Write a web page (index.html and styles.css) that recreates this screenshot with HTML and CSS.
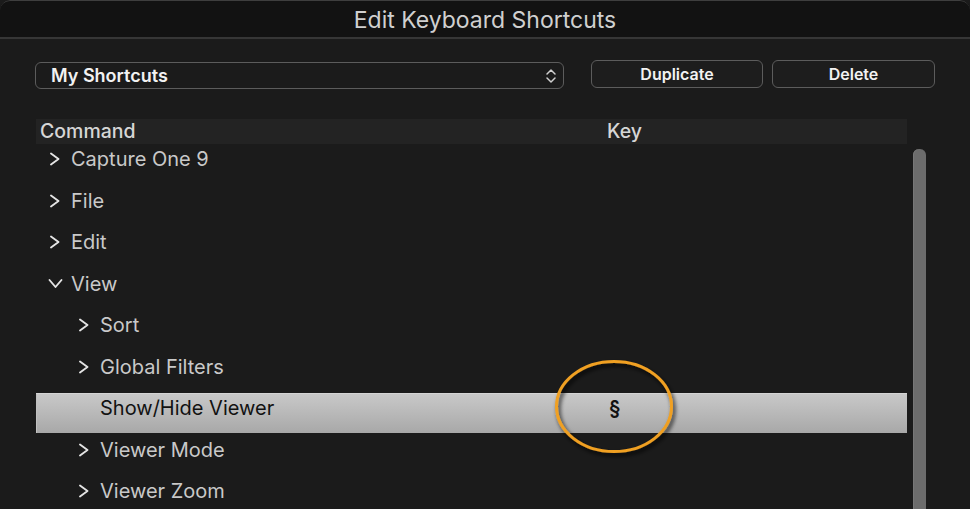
FILE: index.html
```html
<!DOCTYPE html>
<html>
<head>
<meta charset="utf-8">
<link rel="stylesheet" href="styles.css">
</head>
<body>
<div class="window">
  <div class="titlebar">Edit Keyboard Shortcuts</div>
  <div class="toolbar">
    <div class="popup">
      <span>My Shortcuts</span>
      <svg class="updown" width="12" height="18" viewBox="0 0 12 18"><path d="M2 7 L6 3 L10 7 M2 11 L6 15 L10 11" fill="none" stroke="#cfcfcf" stroke-width="1.5" stroke-linecap="round" stroke-linejoin="round"/></svg>
    </div>
    <div class="btn dup">Duplicate</div>
    <div class="btn del">Delete</div>
  </div>
  <div class="table">
    <div class="list">
      <div class="header"><span class="cmd">Command</span><span class="key">Key</span></div>
      <div class="row l1"><div class="cmd"><span class="chev"><svg width="12" height="14" viewBox="0 0 12 14"><path d="M2 1.5 L9.5 7 L2 12.5" fill="none" stroke="#e4e4e4" stroke-width="1.9" stroke-linecap="round" stroke-linejoin="round"/></svg></span><span>Capture One 9</span></div></div>
      <div class="row l1"><div class="cmd"><span class="chev"><svg width="12" height="14" viewBox="0 0 12 14"><path d="M2 1.5 L9.5 7 L2 12.5" fill="none" stroke="#e4e4e4" stroke-width="1.9" stroke-linecap="round" stroke-linejoin="round"/></svg></span><span>File</span></div></div>
      <div class="row l1"><div class="cmd"><span class="chev"><svg width="12" height="14" viewBox="0 0 12 14"><path d="M2 1.5 L9.5 7 L2 12.5" fill="none" stroke="#e4e4e4" stroke-width="1.9" stroke-linecap="round" stroke-linejoin="round"/></svg></span><span>Edit</span></div></div>
      <div class="row l1"><div class="cmd"><span class="chev down"><svg width="15" height="11" viewBox="0 0 15 11"><path d="M1.5 2 L7.5 9 L13.5 2" fill="none" stroke="#e4e4e4" stroke-width="1.9" stroke-linecap="round" stroke-linejoin="round"/></svg></span><span>View</span></div></div>
      <div class="row l2"><div class="cmd"><span class="chev"><svg width="12" height="14" viewBox="0 0 12 14"><path d="M2 1.5 L9.5 7 L2 12.5" fill="none" stroke="#e4e4e4" stroke-width="1.9" stroke-linecap="round" stroke-linejoin="round"/></svg></span><span>Sort</span></div></div>
      <div class="row l2"><div class="cmd"><span class="chev"><svg width="12" height="14" viewBox="0 0 12 14"><path d="M2 1.5 L9.5 7 L2 12.5" fill="none" stroke="#e4e4e4" stroke-width="1.9" stroke-linecap="round" stroke-linejoin="round"/></svg></span><span>Global Filters</span></div></div>
      <div class="row l2 selected"><div class="cmd"><span class="chev"></span><span>Show/Hide Viewer</span></div><div class="key">§</div></div>
      <div class="row l2"><div class="cmd"><span class="chev"><svg width="12" height="14" viewBox="0 0 12 14"><path d="M2 1.5 L9.5 7 L2 12.5" fill="none" stroke="#e4e4e4" stroke-width="1.9" stroke-linecap="round" stroke-linejoin="round"/></svg></span><span>Viewer Mode</span></div></div>
      <div class="row l2"><div class="cmd"><span class="chev"><svg width="12" height="14" viewBox="0 0 12 14"><path d="M2 1.5 L9.5 7 L2 12.5" fill="none" stroke="#e4e4e4" stroke-width="1.9" stroke-linecap="round" stroke-linejoin="round"/></svg></span><span>Viewer Zoom</span></div></div>
    </div>
    <div class="scroll"><div class="thumb"></div></div>
  </div>
  <svg class="annot" width="130" height="106" viewBox="0 0 130 106"><defs><filter id="sh" x="-20%" y="-20%" width="140%" height="140%"><feDropShadow dx="2" dy="3" stdDeviation="2" flood-color="#000" flood-opacity="0.85"/></filter></defs><ellipse cx="64" cy="51.5" rx="57.5" ry="45" fill="none" stroke="#f0a022" stroke-width="3" filter="url(#sh)"/></svg>
</div>
</body>
</html>
```
FILE: styles.css
```css
html, body {
  margin: 0;
  padding: 0;
  background: #1b1b1b;
}
body {
  width: 970px;
  height: 509px;
  overflow: hidden;
  font-family: Inter, "Noto Sans", "Liberation Sans", sans-serif;
}
.window {
  position: relative;
  height: 509px;
  background: #1b1b1b;
  border-radius: 10px 10px 0 0;
  overflow: hidden;
}
.titlebar {
  box-sizing: border-box;
  height: 39px;
  background: #121212;
  border-top: 1px solid #3e3e3e;
  border-bottom: 2px solid #363636;
  border-radius: 10px 10px 0 0;
  display: flex;
  align-items: center;
  justify-content: center;
  color: #d0d0d0;
  font-size: 23px;
  line-height: 26px;
  padding-top: 2px;
}
.toolbar {
  display: flex;
  align-items: flex-start;
  padding-left: 35px;
  margin-top: 21px;
}
.popup {
  box-sizing: border-box;
  margin-top: 2px;
  width: 529px;
  height: 27px;
  border: 1px solid #5c5c5c;
  border-radius: 6px;
  display: flex;
  align-items: center;
  justify-content: space-between;
  padding: 0 6px 0 15px;
  color: #f2f2f2;
  font-size: 18px;
  font-weight: 600;
}
.btn {
  box-sizing: border-box;
  height: 28px;
  border: 1px solid #5c5c5c;
  border-radius: 6px;
  background: #1d1d1d;
  color: #f2f2f2;
  font-size: 16px;
  font-weight: 600;
  display: flex;
  align-items: center;
  justify-content: center;
}
.dup { margin-left: 27px; width: 172px; }
.del { margin-left: 9px; width: 163px; }
.table {
  display: flex;
  padding-left: 36px;
  margin-top: 30px;
}
.list {
  width: 871px;
}
.header {
  height: 25px;
  background: #232323;
  display: flex;
  color: #d6d6d6;
  font-size: 19.5px;
  font-weight: 500;
  line-height: 22px;
  padding-top: 1px;
  box-sizing: border-box;
}
.header .cmd {
  width: 567px;
  padding-left: 4px;
}
.row {
  height: 40px;
  margin-bottom: 1.5px;
  display: flex;
  box-sizing: border-box;
  color: #c9c9c9;
  font-size: 20px;
  line-height: 22px;
  padding-top: 4px;
}
.row .cmd {
  width: 571px;
  box-sizing: border-box;
  display: flex;
  align-items: flex-start;
}
.l1 .cmd { padding-left: 13px; }
.l2 .cmd { padding-left: 42px; }
.chev {
  width: 22px;
  height: 22px;
  display: flex;
  align-items: center;
  flex-shrink: 0;
}
.chev.down {
  width: 22px;
  margin-left: -1px;
  margin-right: 1px;
}
.selected {
  background: linear-gradient(#c9c9c9, #a8a8a8);
  box-shadow: inset 0 1px 0 #d4d4d4, inset 1px 0 0 #c0c0c0;
  color: #121212;
}
.selected .key {
  font-weight: 600;
  padding-left: 2px;
}
.scroll {
  margin-left: 6px;
  width: 13px;
  padding-top: 30px;
}
.thumb {
  width: 13px;
  height: 400px;
  background: #6c6c6c;
  border-radius: 6px 6px 0 0;
  box-shadow: inset 1px 0 0 #777;
}
.annot {
  position: absolute;
  left: 550px;
  top: 355px;
}
```
